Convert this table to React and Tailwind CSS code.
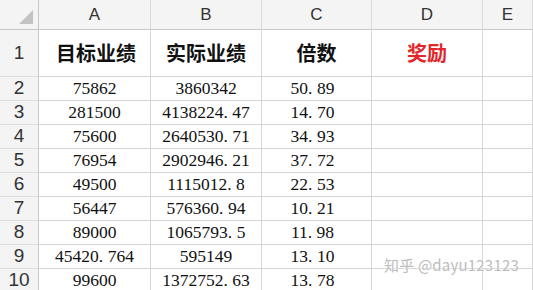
import React from "react";

const COLS = ["A", "B", "C", "D", "E"];

const ROWS = [
  ["75862", "3860342", "50.89"],
  ["281500", "4138224.47", "14.70"],
  ["75600", "2640530.71", "34.93"],
  ["76954", "2902946.21", "37.72"],
  ["49500", "1115012.8", "22.53"],
  ["56447", "576360.94", "10.21"],
  ["89000", "1065793.5", "11.98"],
  ["45420.764", "595149", "13.10"],
  ["99600", "1372752.63", "13.78"],
];

// SimSun gives the period a full half-width cell, so pad it out
const Num = ({ value }) => {
  const [a, b] = value.split(".");
  return (
    <span>
      {a}
      {b !== undefined && (
        <>
          <span className="mr-[4.5px]">.</span>
          {b}
        </>
      )}
    </span>
  );
};

const cell = "border-r border-b border-[#d6d6d6] flex items-center justify-center";
const rowHead =
  "bg-[#f4f4f4] border-r border-b border-r-[#c8c8c8] border-b-[#dcdcdc] flex items-center justify-center text-[19px] text-[#333] font-['Liberation_Sans',sans-serif]";
const title = "text-[20px] font-bold font-['Noto_Sans_CJK_SC',sans-serif]";
const num = "text-[17.5px] font-['Liberation_Serif',serif]";

const App = () => {
  return (
    <div className="relative w-[533px] h-[290px] overflow-hidden bg-white text-[#111]">
      <div className="grid grid-cols-[39px_112px_111px_110px_111px_1fr] grid-rows-[30px_47px_repeat(9,24px)]">
        <div className="bg-[#f4f4f4] border-r border-b border-[#c8c8c8] flex items-end justify-end pr-[5px] pb-[5px]">
          <svg width="14" height="14" viewBox="0 0 14 14">
            <polygon points="14,0 14,14 0,14" fill="#c3c3c3" />
          </svg>
        </div>
        {COLS.map((c) => (
          <div
            key={c}
            className="bg-[#f4f4f4] border-r border-b border-r-[#dcdcdc] border-b-[#c8c8c8] flex items-center justify-center pt-[1px] text-[17px] text-[#333] font-['Liberation_Sans',sans-serif]"
          >
            {c}
          </div>
        ))}

        <div className={rowHead}>1</div>
        <div className={`${cell} ${title} pl-[3px]`}>目标业绩</div>
        <div className={`${cell} ${title}`}>实际业绩</div>
        <div className={`${cell} ${title}`}>倍数</div>
        <div className={`${cell} ${title} text-[#e3262a]`}>奖励</div>
        <div className={cell} />

        {ROWS.map((r, i) => (
          <React.Fragment key={i}>
            <div className={rowHead}>{i + 2}</div>
            {r.map((v, j) => (
              <div key={j} className={`${cell} ${num} ${j === 2 ? "pr-[8px]" : ""}`}>
                <Num value={v} />
              </div>
            ))}
            <div className={cell} />
            <div className={cell} />
          </React.Fragment>
        ))}
      </div>

      <div className="absolute left-[384px] top-[254px] text-[15px] text-[#bcbcbc] tracking-[0.2px] font-['Noto_Sans_CJK_SC',sans-serif] [text-shadow:0_0_2px_#fff,0_0_2px_#fff]">
        知乎 @dayu123123
      </div>
    </div>
  );
};

export default App;
